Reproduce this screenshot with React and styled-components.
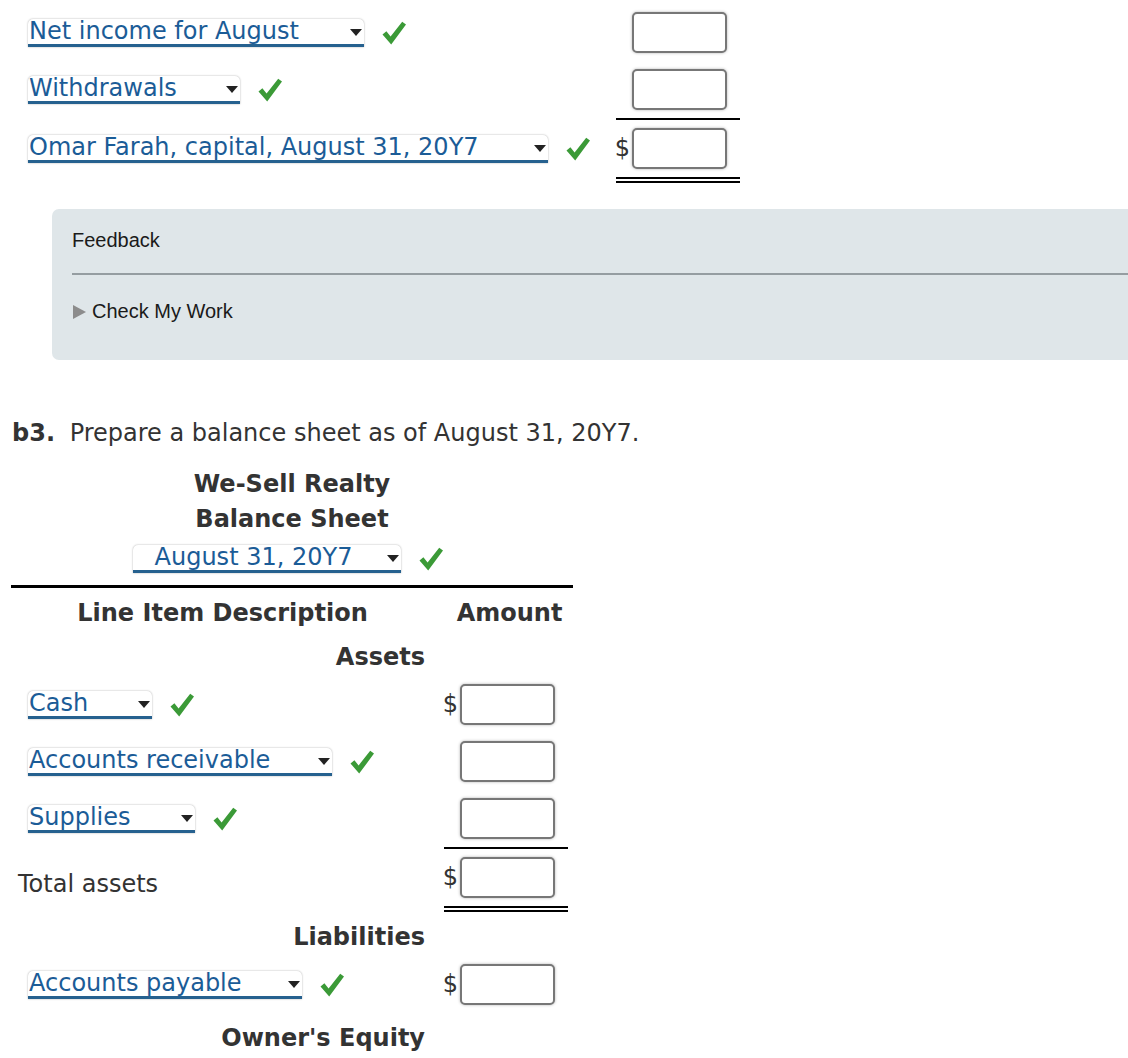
import React from "react";
import styled, { createGlobalStyle } from "styled-components";

const incomeRows = [
  { label: "Net income for August", width: 336 },
  { label: "Withdrawals", width: 212, rule: "single" },
  { label: "Omar Farah, capital, August 31, 20Y7", width: 520, dollar: true, rule: "double" },
];

const balanceRows = [
  { type: "section", label: "Assets" },
  { type: "select", label: "Cash", width: 124, dollar: true },
  { type: "select", label: "Accounts receivable", width: 304 },
  { type: "select", label: "Supplies", width: 167, rule: "single" },
  { type: "text", label: "Total assets", dollar: true, rule: "double" },
  { type: "section", label: "Liabilities" },
  { type: "select", label: "Accounts payable", width: 274, dollar: true },
  { type: "section", label: "Owner's Equity" },
];

const Check = () => (
  <CheckIcon viewBox="0 0 24 24" aria-hidden="true">
    <path d="M0.5 13.5 L4.4 10.2 L8.6 15.4 L20.2 0.8 L24 3.6 L9.2 23.6 Z" fill="#3b9a37" />
  </CheckIcon>
);

const Dropdown = ({ width, label, center }) => (
  <DropdownBox $width={width}>
    <DropdownText $center={center}>{label}</DropdownText>
    <Caret />
  </DropdownBox>
);

const Amount = ({ dollar, rule }) => (
  <AmountCell $rule={rule}>
    {dollar && <Dollar>$</Dollar>}
    <AmountInput type="text" />
  </AmountCell>
);

const App = () => {
  return (
    <Page>
      <GlobalStyle />
      <IncomeTable>
        {incomeRows.map((row) => (
          <Row key={row.label}>
            <LabelCell $indent={17}>
              <Dropdown width={row.width} label={row.label} />
              <Check />
            </LabelCell>
            <Amount dollar={row.dollar} rule={row.rule} />
          </Row>
        ))}
      </IncomeTable>

      <FeedbackBox>
        <FeedbackTitle>Feedback</FeedbackTitle>
        <FeedbackRule />
        <CheckWork>
          <Triangle />
          Check My Work
        </CheckWork>
      </FeedbackBox>

      <Question>
        <strong>b3.</strong> Prepare a balance sheet as of August 31, 20Y7.
      </Question>

      <BalanceSheet>
        <TitleLine>We-Sell Realty</TitleLine>
        <TitleLine>Balance Sheet</TitleLine>
        <DateRow>
          <Dropdown width={268} label="August 31, 20Y7" center />
          <Check />
        </DateRow>
        <HeavyRule />
        <Row>
          <HeadCell>Line Item Description</HeadCell>
          <AmountHead>Amount</AmountHead>
        </Row>
        {balanceRows.map((row) => {
          if (row.type === "section") {
            return (
              <Row key={row.label}>
                <SectionCell>{row.label}</SectionCell>
                <EmptyAmount />
              </Row>
            );
          }
          return (
            <Row key={row.label}>
              {row.type === "select" ? (
                <LabelCell $indent={17}>
                  <Dropdown width={row.width} label={row.label} />
                  <Check />
                </LabelCell>
              ) : (
                <LabelCell $indent={7} $top>
                  <PlainLabel>{row.label}</PlainLabel>
                </LabelCell>
              )}
              <Amount dollar={row.dollar} rule={row.rule} />
            </Row>
          );
        })}
      </BalanceSheet>
    </Page>
  );
};

export default App;

const GlobalStyle = createGlobalStyle`
  html, body {
    margin: 0;
    padding: 0;
    background: #fff;
    overflow-x: hidden;
  }
  body {
    font-family: "DejaVu Sans", Verdana, sans-serif;
    color: #333;
  }
`;

const Page = styled.div`
  padding: 4px 0 40px 11px;
`;

const IncomeTable = styled.div`
  width: 734px;
`;

const Row = styled.div`
  display: flex;
  align-items: flex-start;
`;

const LabelCell = styled.div`
  flex: 1;
  display: flex;
  align-items: ${(p) => (p.$top ? "flex-start" : "center")};
  min-height: 41px;
  padding: 8px 0 8px ${(p) => p.$indent}px;
`;

const DropdownBox = styled.div`
  box-sizing: border-box;
  width: ${(p) => p.$width}px;
  height: 28px;
  display: flex;
  align-items: flex-start;
  padding: 0 2px 0 1px;
  background: #fff;
  border-radius: 5px 5px 0 0;
  box-shadow: 0 0 2px rgba(0, 0, 0, 0.35);
  border-bottom: 3px solid #26618f;
  color: #1b5c97;
  font-size: 24px;
  line-height: 25px;
  white-space: nowrap;
`;

const DropdownText = styled.span`
  flex: 1;
  text-align: ${(p) => (p.$center ? "center" : "left")};
  padding-right: ${(p) => (p.$center ? "14px" : "0")};
`;

const Caret = styled.span`
  margin-top: 10px;
  width: 0;
  height: 0;
  border-left: 6.5px solid transparent;
  border-right: 6.5px solid transparent;
  border-top: 7px solid #222;
`;

const CheckIcon = styled.svg`
  width: 24px;
  height: 24px;
  margin-left: 18px;
  flex-shrink: 0;
`;

const AmountCell = styled.div`
  box-sizing: content-box;
  width: 111px;
  display: flex;
  justify-content: flex-end;
  align-items: center;
  padding: 8px 13px 8px 0;
  margin-right: 5px;
  border-bottom: ${(p) =>
    p.$rule === "single" ? "2px solid #000" : p.$rule === "double" ? "6px double #000" : "none"};
`;

const EmptyAmount = styled.div`
  width: 124px;
  margin-right: 5px;
`;

const Dollar = styled.span`
  font-size: 24px;
  line-height: 41px;
  margin-right: 2px;
  color: #333;
`;

const AmountInput = styled.input`
  box-sizing: border-box;
  width: 95px;
  height: 41px;
  border: 2px solid #777;
  border-radius: 5px;
  box-shadow: 0 0 3px rgba(0, 0, 0, 0.3);
  background: #fff;
  padding: 0 6px;
  font-family: inherit;
  font-size: 20px;
  outline: none;
`;

const FeedbackBox = styled.div`
  margin: 26px -40px 0 41px;
  padding: 20px 0 37px 20px;
  background: #dfe6e9;
  border-radius: 7px;
  font-family: "Liberation Sans", Arial, sans-serif;
  font-size: 20px;
  line-height: 23px;
  color: #1a1a1a;
`;

const FeedbackTitle = styled.div``;

const FeedbackRule = styled.div`
  height: 2px;
  background: #959da1;
  margin: 21px 0 25px;
`;

const CheckWork = styled.div`
  display: flex;
  align-items: center;
`;

const Triangle = styled.span`
  width: 0;
  height: 0;
  margin: 0 6px 0 1px;
  border-top: 7px solid transparent;
  border-bottom: 7px solid transparent;
  border-left: 13px solid #8c8c8c;
`;

const Question = styled.p`
  margin: 59px 0 0 1px;
  font-size: 24px;
  line-height: 29px;
  color: #333;
  strong {
    margin-right: 7px;
  }
`;

const BalanceSheet = styled.div`
  width: 562px;
  margin-top: 19px;
`;

const TitleLine = styled.div`
  text-align: center;
  font-weight: bold;
  font-size: 24px;
  line-height: 35px;
  color: #333;
`;

const DateRow = styled.div`
  display: flex;
  justify-content: center;
  align-items: center;
  margin-top: 8px;
  padding-right: 8px;
`;

const HeavyRule = styled.div`
  height: 3px;
  background: #000;
  margin-top: 12px;
`;

const HeadCell = styled.div`
  flex: 1;
  text-align: center;
  font-weight: bold;
  font-size: 24px;
  line-height: 29px;
  padding: 11px 10px 4px 0;
`;

const AmountHead = styled.div`
  width: 124px;
  margin-right: 5px;
  box-sizing: border-box;
  padding: 11px 0 4px 7px;
  text-align: center;
  font-weight: bold;
  font-size: 24px;
  line-height: 29px;
`;

const SectionCell = styled.div`
  flex: 1;
  text-align: right;
  font-weight: bold;
  font-size: 24px;
  line-height: 29px;
  padding: 11px 19px 4px 0;
`;

const PlainLabel = styled.span`
  padding-top: 13px;
  font-size: 24px;
  line-height: 29px;
  color: #333;
`;
